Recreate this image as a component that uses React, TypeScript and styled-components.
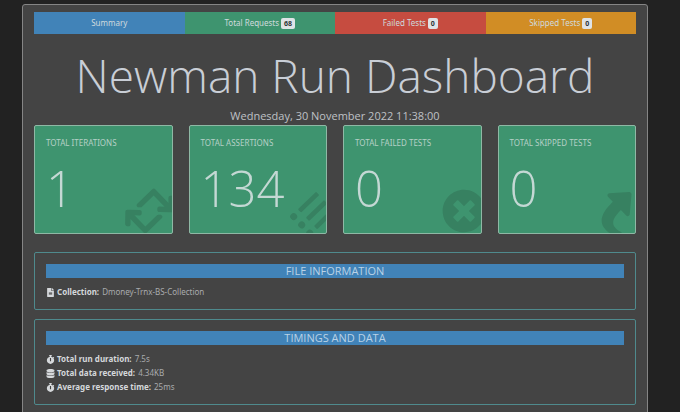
import type { ReactNode } from "react";
import styled, { createGlobalStyle } from "styled-components";
import {
  FaDatabase,
  FaFileAlt,
  FaListUl,
  FaRetweet,
  FaShare,
  FaStopwatch,
  FaTimesCircle,
} from "react-icons/fa";

const GlobalStyle = createGlobalStyle`
  *, *::before, *::after { box-sizing: border-box; }
  body {
    margin: 0;
    background: #222222;
    color: #a9abad;
    font-family: "Noto Sans", "Open Sans", sans-serif;
    font-size: 8px;
    line-height: 14px;
  }
`;

const Page = styled.div`
  padding: 4px 32px 0 22px;
`;

const Report = styled.main`
  padding: 7px 11px 24px;
  background: #444444;
  border: 1px solid #858585;
  border-radius: 3px;
`;

const Tabs = styled.nav`
  display: grid;
  grid-template-columns: repeat(4, 1fr);
`;

const Tab = styled.a<{ $color: string }>`
  display: flex;
  align-items: center;
  justify-content: center;
  gap: 2px;
  height: 22px;
  background: ${(p) => p.$color};
  color: #cfdadd;
  text-decoration: none;
`;

const Badge = styled.span`
  padding: 0 3px;
  border-radius: 2px;
  background: #dfe3e6;
  color: #2f3336;
  font-size: 7px;
  font-weight: 700;
  line-height: 11px;
`;

const Title = styled.h1`
  margin: 10px 0 1px;
  color: #c9ced6;
  font-family: "Open Sans", "Noto Sans", sans-serif;
  font-size: 46px;
  font-weight: 300;
  line-height: 62px;
  text-align: center;
  white-space: nowrap;
`;

const RunDate = styled.p`
  margin: 0;
  color: #bfc1c4;
  font-family: "Open Sans", "Noto Sans", sans-serif;
  font-size: 11px;
  line-height: 18px;
  text-align: center;
`;

const Cards = styled.section`
  display: grid;
  grid-template-columns: repeat(4, 1fr);
  gap: 16px;
`;

const Card = styled.article`
  position: relative;
  height: 109px;
  padding: 10px 11px;
  overflow: hidden;
  background: #3e946f;
  border: 1px solid #8fb8a5;
  border-radius: 2px;
`;

const CardLabel = styled.h2`
  margin: 0;
  color: #b5d0c6;
  font-size: 8px;
  font-weight: 400;
  line-height: 14px;
  text-transform: uppercase;
`;

const CardValue = styled.p`
  margin: 8px 0 0;
  color: #c4d8d4;
  font-family: "Open Sans", "Noto Sans", sans-serif;
  font-size: 49px;
  font-weight: 300;
  line-height: 60px;
`;

const CardIcon = styled.span<{ $size: number }>`
  position: absolute;
  right: -5px;
  bottom: 0;
  display: flex;
  color: rgba(20, 20, 20, 0.15);
  font-size: ${(p) => p.$size}px;
  transform: rotate(-44deg);
`;

const RetweetIcon = styled(FaRetweet)`
  width: 55px;
`;

/* The cross stays upright inside the tilted icon slot. */
const FailedIcon = styled(FaTimesCircle)`
  transform: rotate(44deg);
`;

const Panel = styled.section`
  margin-top: 9px;
  padding: 11px 11px 10px;
  border: 1px solid #4f8a8d;
  border-radius: 2px;

  ${Cards} + & { margin-top: 18px; }
`;

const PanelTitle = styled.h2`
  margin: 0 0 7px;
  background: #4183b8;
  color: #b9d2e6;
  font-family: "Open Sans", "Noto Sans", sans-serif;
  font-size: 11px;
  font-weight: 400;
  line-height: 14px;
  text-align: center;
  text-transform: uppercase;
`;

const Facts = styled.dl`
  margin: 0;
`;

const Fact = styled.div`
  display: flex;
  align-items: center;
  gap: 2px;
  color: #d5d8db;

  svg { font-size: 9px; }
  dt { font-weight: 700; }
  dd { margin: 0 0 0 1px; color: #a9abad; }
`;

const tabs = [
  { label: "Summary", color: "#4183b8" },
  { label: "Total Requests", color: "#3e946f", count: 68 },
  { label: "Failed Tests", color: "#c64c40", count: 0 },
  { label: "Skipped Tests", color: "#d18d25", count: 0 },
];

const cards: { label: string; value: number; icon: ReactNode; iconSize: number }[] = [
  { label: "Total iterations", value: 1, icon: <RetweetIcon />, iconSize: 44 },
  { label: "Total assertions", value: 134, icon: <FaListUl />, iconSize: 37 },
  { label: "Total failed tests", value: 0, icon: <FailedIcon />, iconSize: 44 },
  { label: "Total skipped tests", value: 0, icon: <FaShare />, iconSize: 44 },
];

const panels: { title: string; facts: { icon: ReactNode; name: string; value: string }[] }[] = [
  {
    title: "File information",
    facts: [{ icon: <FaFileAlt />, name: "Collection:", value: "Dmoney-Trnx-BS-Collection" }],
  },
  {
    title: "Timings and data",
    facts: [
      { icon: <FaStopwatch />, name: "Total run duration:", value: "7.5s" },
      { icon: <FaDatabase />, name: "Total data received:", value: "4.34KB" },
      { icon: <FaStopwatch />, name: "Average response time:", value: "25ms" },
    ],
  },
];

export default function App() {
  return (
    <>
      <GlobalStyle />
      <Page>
        <Report>
          <Tabs>
            {tabs.map((tab) => (
              <Tab key={tab.label} href="#" $color={tab.color}>
                {tab.label}
                {tab.count !== undefined && <Badge>{tab.count}</Badge>}
              </Tab>
            ))}
          </Tabs>
          <Title>Newman Run Dashboard</Title>
          <RunDate>Wednesday, 30 November 2022 11:38:00</RunDate>
          <Cards>
            {cards.map((card) => (
              <Card key={card.label}>
                <CardIcon $size={card.iconSize}>{card.icon}</CardIcon>
                <CardLabel>{card.label}</CardLabel>
                <CardValue>{card.value}</CardValue>
              </Card>
            ))}
          </Cards>
          {panels.map((panel) => (
            <Panel key={panel.title}>
              <PanelTitle>{panel.title}</PanelTitle>
              <Facts>
                {panel.facts.map((fact) => (
                  <Fact key={fact.name}>
                    {fact.icon}
                    <dt>{fact.name}</dt>
                    <dd>{fact.value}</dd>
                  </Fact>
                ))}
              </Facts>
            </Panel>
          ))}
        </Report>
      </Page>
    </>
  );
}
